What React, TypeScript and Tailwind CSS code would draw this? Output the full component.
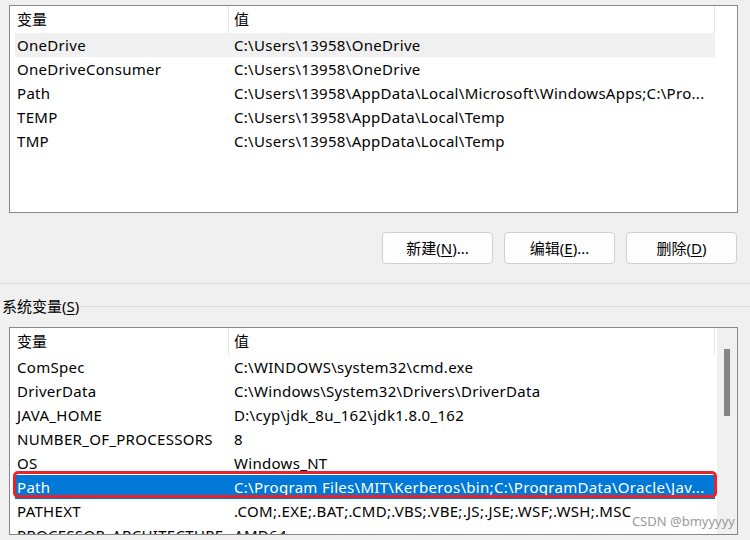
import React from "react";

const FONT = { fontFamily: '"Segoe UI", "Noto Sans", "Noto Sans CJK SC", sans-serif' };

type Row = [string, string];

const userRows: Row[] = [
  ["OneDrive", "C:\\Users\\13958\\OneDrive"],
  ["OneDriveConsumer", "C:\\Users\\13958\\OneDrive"],
  ["Path", "C:\\Users\\13958\\AppData\\Local\\Microsoft\\WindowsApps;C:\\Pro..."],
  ["TEMP", "C:\\Users\\13958\\AppData\\Local\\Temp"],
  ["TMP", "C:\\Users\\13958\\AppData\\Local\\Temp"],
];

const sysRows: Row[] = [
  ["ComSpec", "C:\\WINDOWS\\system32\\cmd.exe"],
  ["DriverData", "C:\\Windows\\System32\\Drivers\\DriverData"],
  ["JAVA_HOME", "D:\\cyp\\jdk_8u_162\\jdk1.8.0_162"],
  ["NUMBER_OF_PROCESSORS", "8"],
  ["OS", "Windows_NT"],
  ["Path", "C:\\Program Files\\MIT\\Kerberos\\bin;C:\\ProgramData\\Oracle\\Jav..."],
  ["PATHEXT", ".COM;.EXE;.BAT;.CMD;.VBS;.VBE;.JS;.JSE;.WSF;.WSH;.MSC"],
  ["PROCESSOR_ARCHITECTURE", "AMD64"],
];

function Header() {
  return (
    <div className="flex h-[27px] items-center text-[15px] text-black">
      <div className="w-[213px] shrink-0 pl-[2px]">变量</div>
      <div className="h-full w-px bg-[#e5e5e5]" />
      <div className="flex-1 pl-[5px]">值</div>
      <div className="h-full w-px bg-[#e5e5e5]" />
    </div>
  );
}

function ListRow({ row, hover, selected }: { row: Row; hover?: boolean; selected?: boolean }) {
  const bg = selected ? "bg-[#0078d7] text-white" : hover ? "bg-[#f0f0f0] text-black" : "text-black";
  return (
    <div className={`flex h-[24px] items-center text-[15px] tracking-[0.3px] whitespace-nowrap ${bg}`}>
      <div className="w-[214px] shrink-0 pl-[2px] overflow-hidden">{row[0]}</div>
      <div className="flex-1 pl-[5px] overflow-hidden">{row[1]}</div>
    </div>
  );
}

function Btn({ label, k, tail }: { label: string; k: string; tail: string }) {
  return (
    <div className="flex h-[32px] w-[111px] items-center justify-center rounded-[4px] border border-[#d0d0d0] bg-[#fdfdfd] text-[15px] text-black">
      <span>
        {label}(<span className="underline underline-offset-2">{k}</span>){tail}
      </span>
    </div>
  );
}

export default function App() {
  return (
    <div className="relative h-[540px] w-[750px] overflow-hidden bg-[#f0f0f0]" style={FONT}>
      {/* user variables list */}
      <div className="ml-[9px] mt-[5px] h-[208px] w-[729px] border border-[#878787] bg-white pl-[5px]">
        <div className="w-[700px]">
          <Header />
          {userRows.map((r, i) => (
            <ListRow key={i} row={r} hover={i === 0} />
          ))}
        </div>
      </div>

      {/* buttons */}
      <div className="mt-[19px] flex justify-end gap-[11px] pr-[13px]">
        <Btn label="新建" k="N" tail="..." />
        <Btn label="编辑" k="E" tail="..." />
        <Btn label="删除" k="D" tail="" />
      </div>

      <div className="mt-[19px] h-px w-full bg-[#dadada]" />

      {/* group label */}
      <div className="mt-[12px] flex h-[20px] items-center">
        <span className="pl-[2px] text-[15px] text-black">
          系统变量(<span className="underline underline-offset-2">S</span>)
        </span>
        <div className="ml-[2px] h-px flex-1 bg-[#dadada]" />
      </div>

      {/* system variables list */}
      <div className="relative ml-[9px] mt-[11px] h-[208px] w-[729px] overflow-hidden border border-[#878787] bg-white">
        <div className="flex h-full">
          <div className="w-[706px] pl-[5px]">
            <div className="w-[700px]">
              <Header />
              {sysRows.map((r, i) => (
                <ListRow key={i} row={r} selected={i === 5} />
              ))}
            </div>
          </div>
          <div className="ml-px h-full w-[20px] bg-[#f0f0f0] pt-[21px] pl-[7px]">
            <div className="h-[67px] w-[6px] bg-[#858585]" />
          </div>
        </div>
        <div className="absolute left-[3px] top-[143px] h-[27px] w-[704px] rounded-[5px] border-[3px] border-[#e8242a]" />
      </div>

      {/* watermark */}
      <div
        className="absolute right-[15px] top-[512px] text-[13px] text-[#9a9a9a]"
        style={{ fontFamily: '"Noto Sans", sans-serif' }}
      >
        CSDN @bmyyyyy
      </div>
    </div>
  );
}
